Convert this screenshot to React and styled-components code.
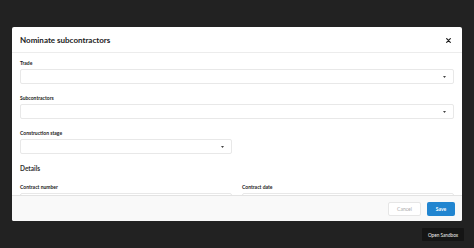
import React from "react";
import styled, { createGlobalStyle } from "styled-components";

const GlobalStyle = createGlobalStyle`
  html, body {
    margin: 0;
    padding: 0;
    background: #222222;
    font-family: Lato, "Helvetica Neue", Arial, sans-serif;
  }
  #root {
    height: 248px;
    position: relative;
    overflow: hidden;
  }
`;

const Caret = () => (
  <svg width="3" height="2" viewBox="0 0 3 2">
    <path d="M0 0 L3 0 L1.5 2 Z" fill="#444" />
  </svg>
);

const CloseIcon = () => (
  <svg width="5" height="5" viewBox="0 0 5 5">
    <path d="M0.7 0.7 L4.3 4.3 M4.3 0.7 L0.7 4.3" stroke="#222" strokeWidth="1.2" strokeLinecap="square" />
  </svg>
);

export default function App() {
  return (
    <>
      <GlobalStyle />
      <SPage>
        <SModal>
          <SHeader>
            <STitle>Nominate subcontractors</STitle>
            <SClose>
              <CloseIcon />
            </SClose>
          </SHeader>
          <SBody>
            <SField>
              <SLabel>Trade</SLabel>
              <SSelect>
                <Caret />
              </SSelect>
            </SField>
            <SField>
              <SLabel>Subcontractors</SLabel>
              <SSelect>
                <Caret />
              </SSelect>
            </SField>
            <SField half>
              <SLabel>Construction stage</SLabel>
              <SSelect>
                <Caret />
              </SSelect>
            </SField>
            <SSection>Details</SSection>
            <SRow>
              <SField>
                <SLabel>Contract number</SLabel>
                <SInput />
              </SField>
              <SField>
                <SLabel>Contract date</SLabel>
                <SInput />
              </SField>
            </SRow>
          </SBody>
          <SFooter>
            <SButton>Cancel</SButton>
            <SButton primary>Save</SButton>
          </SFooter>
        </SModal>
        <SSandbox>Open Sandbox</SSandbox>
      </SPage>
    </>
  );
}

const SPage = styled.div`
  padding: 27px 12px 0 12px;
`;

const SModal = styled.div`
  width: 450px;
  height: 194px;
  background: #fff;
  border-radius: 2px;
  display: flex;
  flex-direction: column;
  overflow: hidden;
`;

const SHeader = styled.div`
  height: 25px;
  flex: none;
  display: flex;
  align-items: center;
  justify-content: space-between;
  padding: 0 11px 0 8px;
  border-bottom: 1px solid #ececec;
`;

const STitle = styled.div`
  font-size: 8px;
  font-weight: 700;
  color: #222;
`;

const SClose = styled.div`
  display: flex;
  align-items: center;
  padding-top: 1px;
`;

const SBody = styled.div`
  flex: 1;
  overflow: hidden;
  padding: 7px 8px 0 8px;
  display: flex;
  flex-direction: column;
  gap: 11px;
`;

const SField = styled.div`
  display: flex;
  flex-direction: column;
  gap: 3px;
  width: ${(props) => (props.half ? "212px" : "auto")};
  flex: ${(props) => (props.half ? "none" : "1")};
`;

const SLabel = styled.div`
  font-size: 5px;
  line-height: 6px;
  font-weight: 700;
  color: #222;
`;

const SSelect = styled.div`
  height: 15px;
  box-sizing: border-box;
  border: 1px solid #e8e8e8;
  border-radius: 2px;
  display: flex;
  align-items: center;
  justify-content: flex-end;
  padding-right: 7px;
`;

const SInput = styled.div`
  height: 15px;
  box-sizing: border-box;
  border: 1px solid #e8e8e8;
  border-radius: 2px;
`;

const SSection = styled.div`
  font-size: 6.5px;
  line-height: 8px;
  font-weight: 700;
  color: #333;
`;

const SRow = styled.div`
  display: flex;
  gap: 10px;
`;

const SFooter = styled.div`
  height: 26px;
  flex: none;
  box-sizing: border-box;
  background: #f9f9f9;
  border-top: 1px solid #e3e3e3;
  display: flex;
  align-items: center;
  justify-content: flex-end;
  gap: 6px;
  padding: 0 7px;
`;

const SButton = styled.button`
  height: 14px;
  padding: 0;
  width: ${(props) => (props.primary ? "28px" : "33px")};
  border-radius: 2px;
  font-family: Lato, sans-serif;
  font-size: 5px;
  font-weight: ${(props) => (props.primary ? 700 : 400)};
  color: ${(props) => (props.primary ? "#fff" : "#aaa")};
  background: ${(props) => (props.primary ? "#2185d0" : "#fff")};
  border: ${(props) => (props.primary ? "none" : "1px solid #e6e6e6")};
`;

const SSandbox = styled.div`
  position: absolute;
  left: 422px;
  top: 228px;
  width: 42px;
  height: 13px;
  background: #151515;
  color: #eee;
  font-size: 4.7px;
  display: flex;
  align-items: center;
  justify-content: center;
  border-radius: 1px;
`;
